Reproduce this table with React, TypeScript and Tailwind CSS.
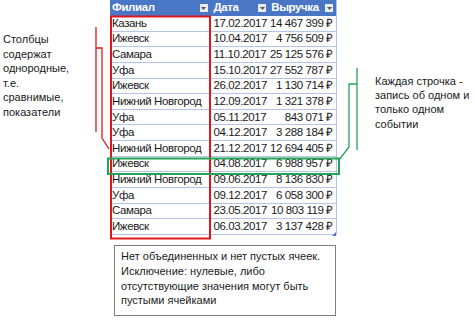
import React from "react";

const rows: [string, string, string][] = [
  ["Казань", "17.02.2017", "14 467 399 ₽"],
  ["Ижевск", "10.04.2017", "4 756 509 ₽"],
  ["Самара", "11.10.2017", "25 125 576 ₽"],
  ["Уфа", "15.10.2017", "27 552 787 ₽"],
  ["Ижевск", "26.02.2017", "1 130 714 ₽"],
  ["Нижний Новгород", "12.09.2017", "1 321 378 ₽"],
  ["Уфа", "05.11.2017", "843 071 ₽"],
  ["Уфа", "04.12.2017", "3 288 184 ₽"],
  ["Нижний Новгород", "21.12.2017", "12 694 405 ₽"],
  ["Ижевск", "04.08.2017", "6 988 957 ₽"],
  ["Нижний Новгород", "09.06.2017", "8 136 830 ₽"],
  ["Уфа", "09.12.2017", "6 058 300 ₽"],
  ["Самара", "23.05.2017", "10 803 119 ₽"],
  ["Ижевск", "06.03.2017", "3 137 428 ₽"],
];

function Drop() {
  return (
    <span className="flex h-[8px] w-[8px] shrink-0 items-center justify-center bg-[#e9ecf2]">
      <svg width="5" height="3" viewBox="0 0 5 3">
        <path d="M0 0 H5 L2.5 3 Z" fill="#555" />
      </svg>
    </span>
  );
}

export default function App() {
  return (
    <div
      className="relative h-[322px] w-[474px] overflow-hidden bg-white text-[#1a1a1a]"
      style={{ fontFamily: '"Liberation Sans", Arial, sans-serif' }}
    >
      <div className="flex">
        <div className="w-[110px] pl-[3px] pt-[32px] text-[11px] leading-[14.6px]">
          <div>Столбцы</div>
          <div>содержат</div>
          <div>однородные,</div>
          <div>т.е.</div>
          <div>сравнимые,</div>
          <div>показатели</div>
        </div>
        <div className="w-[227px] border-r border-[#b4c6e7] text-[11.5px] tracking-[-0.4px] whitespace-nowrap">
          <div className="flex h-[16px] items-center bg-[#4a76c6] font-bold text-white">
            <div className="flex w-[101px] items-center justify-between pl-[2px] pr-[3px]">
              <span>Филиал</span>
              <Drop />
            </div>
            <div className="flex w-[59px] items-center justify-between pl-[3px] pr-[3px]">
              <span>Дата</span>
              <Drop />
            </div>
            <div className="flex w-[67px] items-center justify-between pl-[2px] pr-[3px]">
              <span>Выручка</span>
              <Drop />
            </div>
          </div>
          {rows.map((r, i) => (
            <div key={i} className="flex h-[15.65px] items-center border-b border-[#b4c6e7]">
              <div className="w-[101px] pl-[2px]">{r[0]}</div>
              <div className="w-[59px] pl-[3px]">{r[1]}</div>
              <div className="w-[67px] pr-[3px] text-right">{r[2]}</div>
            </div>
          ))}
        </div>
        <div className="pl-[38px] pt-[74px] text-[11px] leading-[14.2px]">
          <div>Каждая строчка -</div>
          <div>запись об одном и</div>
          <div>только одном</div>
          <div>событии</div>
        </div>
      </div>
      <div className="ml-[114px] mt-[10px] h-[71px] w-[222px] border border-[#7f7f7f] pl-[6px] pt-[3px] text-[11px] leading-[14.8px]">
        <div>Нет объединенных и нет пустых ячеек.</div>
        <div>Исключение: нулевые, либо</div>
        <div>отсутствующие значения могут быть</div>
        <div>пустыми ячейками</div>
      </div>
      <svg className="pointer-events-none absolute inset-0" width="474" height="322">
        <rect x="111" y="16.5" width="99" height="222" fill="none" stroke="#e0161e" strokeWidth="2" />
        <rect x="108" y="158.5" width="231" height="15.5" fill="none" stroke="#22a356" strokeWidth="2" />
        <path d="M96 27 V132 M96 48 H102 V138 L109 149" fill="none" stroke="#e0161e" strokeWidth="1.3" />
        <path d="M357 68 V150 M357 84 H349 V147 L339 160" fill="none" stroke="#22a356" strokeWidth="1.3" />
        <path d="M332 236 L336 236 L336 232 Z" fill="#4a76c6" />
      </svg>
    </div>
  );
}
